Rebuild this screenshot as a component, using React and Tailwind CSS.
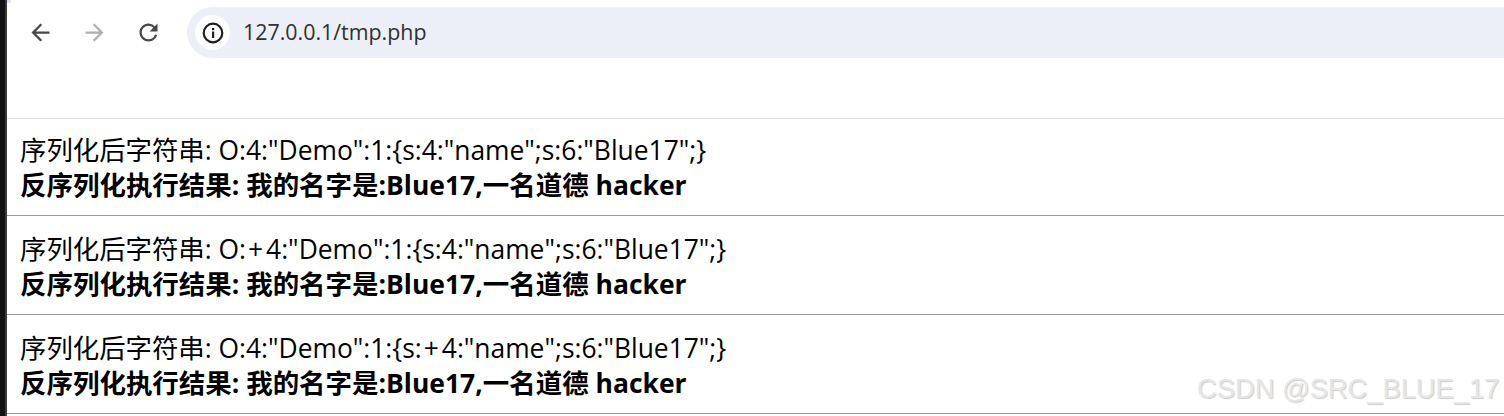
import React from "react";
import { MdArrowBack, MdArrowForward, MdRefresh } from "react-icons/md";

const Plus = () => <span className="ml-[2px] mr-[3px]">+</span>;

const rows = [
  <>O:4:"Demo":1:{'{'}s:4:"name";s:6:"Blue17";{'}'}</>,
  <>O:<Plus />4:"Demo":1:{'{'}s:4:"name";s:6:"Blue17";{'}'}</>,
  <>O:4:"Demo":1:{'{'}s:<Plus />4:"name";s:6:"Blue17";{'}'}</>,
];

const App = () => {
  return (
    <div className="relative w-[1504px] h-[416px] overflow-hidden bg-white flex font-['Open_Sans','Noto_Sans_CJK_SC',sans-serif]">
      <div className="w-[7px] bg-[#111] border-r-2 border-[#3a3a3a]" />
      <div className="flex-1 min-w-0">
        <div className="h-[111px] border-b border-[#e3e3e3] pt-[7px] box-content">
          <div className="flex items-center h-[51px]">
            <MdArrowBack size={27} className="ml-[20px] text-[#474747]" />
            <MdArrowForward size={27} className="ml-[27px] text-[#b0b0b0]" />
            <MdRefresh size={27} className="ml-[27px] text-[#474747]" />
            <div className="ml-[25px] flex-1 h-[51px] bg-[#eceff8] rounded-l-full flex items-center pl-[8px]">
              <div className="w-[35px] h-[35px] rounded-full bg-white flex items-center justify-center">
                <svg width="22" height="22" viewBox="0 0 22 22" fill="none">
                  <circle cx="11" cy="11" r="9.3" stroke="#1f1f1f" strokeWidth="2.2" />
                  <rect x="10" y="9.5" width="2.2" height="6.5" fill="#1f1f1f" />
                  <rect x="10" y="6" width="2.2" height="2.2" fill="#1f1f1f" />
                </svg>
              </div>
              <span className="ml-[13px] text-[21.4px] text-[#303030]">127.0.0.1/tmp.php</span>
            </div>
          </div>
        </div>
        <div className="pl-[13px] pt-[14px]">
          {rows.map((row, i) => (
            <div key={i}>
              <div className="text-[26.4px] leading-[35px] text-black">序列化后字符串: {row}</div>
              <div className="text-[26.48px] leading-[35px] font-bold text-black">
                反序列化执行结果: 我的名字是:Blue17,一名道德 hacker
              </div>
              <hr className="mt-[12px] mb-[16px] -ml-[13px] border-[#9a9a9a]" />
            </div>
          ))}
        </div>
      </div>
      <div className="absolute left-[7px] top-0 w-[4px] h-[3px] bg-[#d5e0f7] rounded-br-[3px]" />
      <div className="absolute left-[1197px] top-[374px] text-[27.3px] leading-[30px] text-[#e6e6e6] [text-shadow:1px_1px_1px_#cccccc] font-['Liberation_Sans',sans-serif]">
        CSDN @SRC_BLUE_17
      </div>
    </div>
  );
};

export default App;
